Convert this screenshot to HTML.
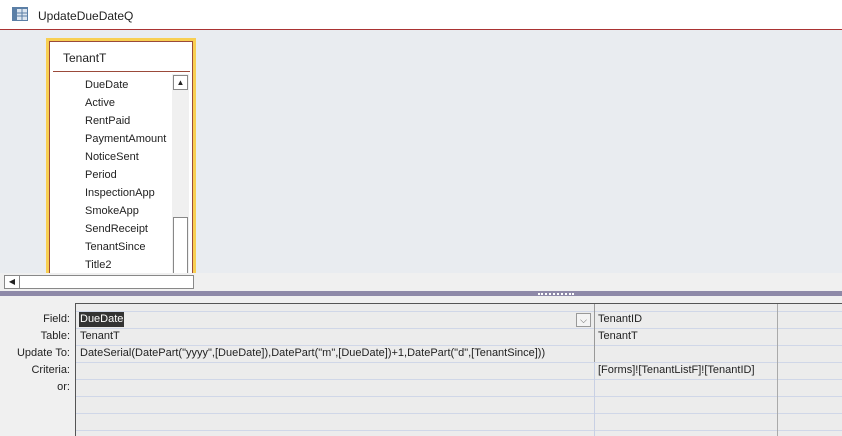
<!DOCTYPE html>
<html><head><style>
*{margin:0;padding:0;box-sizing:border-box}
body{width:842px;height:436px;overflow:hidden;background:#f0f0f0;font-family:"Liberation Sans",sans-serif;font-size:11px;color:#222;position:relative}
.a{position:absolute}
.f{position:absolute;font-size:11px;color:#222;white-space:nowrap}
</style></head><body>
<div class="a" style="left:0;top:0;width:842px;height:29px;background:#fff"></div>
<svg class="a" style="left:12px;top:7px" width="16" height="14"><rect x="0" y="0" width="16" height="14" fill="#5b7fa6"/><rect x="5" y="2" width="10" height="11" fill="#dde6f0"/><g stroke="#5b7fa6" stroke-width="1"><line x1="5" y1="6" x2="15" y2="6"/><line x1="5" y1="9" x2="15" y2="9"/><line x1="10" y1="2" x2="10" y2="13"/></g></svg>
<div class="f" style="left:38px;top:9px;font-size:12px">UpdateDueDateQ</div>
<div class="a" style="left:0;top:29px;width:842px;height:1px;background:#a33"></div>
<div class="a" style="left:0;top:30px;width:842px;height:243px;background:#e9ecf0"></div>
<div class="a" style="left:46px;top:38px;width:150px;height:236px;border:3px solid #f8cf52;border-bottom:none;background:#fff"></div>
<div class="a" style="left:49px;top:41px;width:144px;height:233px;border:1px solid #9b4a3a;border-bottom:none"></div>
<div class="f" style="left:63px;top:51px;font-size:12px">TenantT</div>
<div class="a" style="left:53px;top:71px;width:137px;height:1px;background:#9b4a3a"></div>
<div class="a" style="left:172px;top:74px;width:17px;height:200px;background:#f0f0f0"></div>
<div class="a" style="left:173px;top:75px;width:15px;height:15px;border:1px solid #888;background:#fff;font-size:8px;text-align:center;line-height:13px">▲</div>
<div class="a" style="left:173px;top:217px;width:15px;height:57px;border:1px solid #888;background:#fff"></div>
<div class="f" style="left:85px;top:79px">DueDate</div>
<div class="f" style="left:85px;top:97px">Active</div>
<div class="f" style="left:85px;top:115px">RentPaid</div>
<div class="f" style="left:85px;top:133px">PaymentAmount</div>
<div class="f" style="left:85px;top:151px">NoticeSent</div>
<div class="f" style="left:85px;top:169px">Period</div>
<div class="f" style="left:85px;top:187px">InspectionApp</div>
<div class="f" style="left:85px;top:205px">SmokeApp</div>
<div class="f" style="left:85px;top:223px">SendReceipt</div>
<div class="f" style="left:85px;top:241px">TenantSince</div>
<div class="f" style="left:85px;top:259px">Title2</div>
<div class="a" style="left:0;top:273px;width:842px;height:18px;background:#f0f0f0"></div>
<div class="a" style="left:4px;top:275px;width:16px;height:14px;border:1px solid #888;background:#fff;font-size:8px;line-height:12px;text-align:center">◀</div>
<div class="a" style="left:19px;top:275px;width:175px;height:14px;border:1px solid #888;background:#fff"></div>
<div class="a" style="left:0;top:291px;width:842px;height:5px;background:#8e89a8"></div>
<div class="a" style="left:538px;top:293px;width:36px;height:2px;border-top:2px dotted #fff"></div>
<div class="a" style="left:75px;top:303px;width:767px;height:133px;border-left:1px solid #555;border-top:1px solid #555;background:#ececec"></div>
<div class="a" style="left:76px;top:304px;width:766px;height:132px;background:repeating-linear-gradient(to bottom,transparent 0,transparent 7px,#d0d7e8 7px,#d0d7e8 8px,transparent 8px,transparent 17px)"></div>
<div class="a" style="left:594px;top:304px;width:1px;height:132px;background:#c8d0e4"></div>
<div class="a" style="left:594px;top:304px;width:1px;height:58px;background:#999"></div>
<div class="a" style="left:777px;top:304px;width:1px;height:132px;background:#aaa"></div>
<div class="f" style="left:0;top:313px;width:70px;text-align:right">Field:</div>
<div class="f" style="left:0;top:330px;width:70px;text-align:right">Table:</div>
<div class="f" style="left:0;top:347px;width:70px;text-align:right">Update To:</div>
<div class="f" style="left:0;top:364px;width:70px;text-align:right">Criteria:</div>
<div class="f" style="left:0;top:381px;width:70px;text-align:right">or:</div>
<div class="a" style="left:79px;top:312px;width:45px;height:15px;background:#333"></div>
<div class="f" style="left:80px;top:313px;color:#fff">DueDate</div>
<div class="a" style="left:576px;top:313px;width:15px;height:14px;border:1px solid #999;background:#f4f4f4;font-size:9px;text-align:center;line-height:12px;color:#555">⌵</div>
<div class="f" style="left:80px;top:330px">TenantT</div>
<div class="f" style="left:80px;top:347px">DateSerial(DatePart("yyyy",[DueDate]),DatePart("m",[DueDate])+1,DatePart("d",[TenantSince]))</div>
<div class="f" style="left:598px;top:313px">TenantID</div>
<div class="f" style="left:598px;top:330px">TenantT</div>
<div class="f" style="left:598px;top:364px">[Forms]![TenantListF]![TenantID]</div>
</body></html>
